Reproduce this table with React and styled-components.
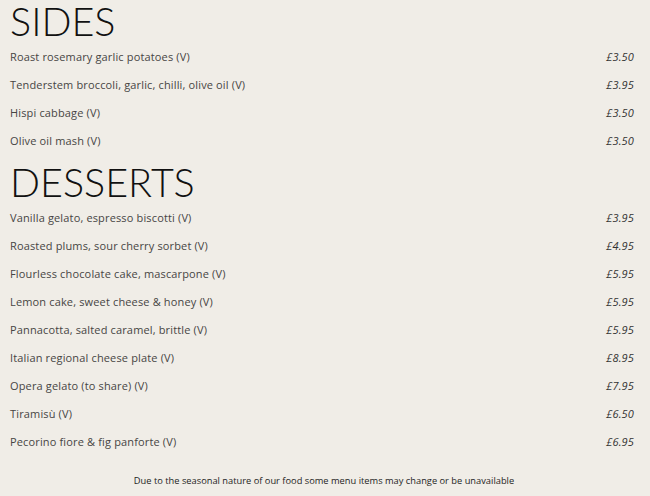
import styled, { createGlobalStyle } from "styled-components";

const GlobalStyle = createGlobalStyle`
  html, body {
    margin: 0;
    padding: 0;
    background: #f0ede7;
  }
`;

const Page = styled.div`
  width: 650px;
  height: 496px;
  background: #f0ede7;
  padding: 0 16px 0 10px;
  box-sizing: border-box;
  overflow: hidden;
`;

const Heading = styled.h2`
  margin: ${(p) => p.$gap}px 0 0;
  height: 43px;
  font-family: Lato, "Liberation Sans", sans-serif;
  font-weight: 300;
  font-size: 39.5px;
  line-height: 42px;
  color: #111;
`;

const List = styled.ul`
  list-style: none;
  margin: 0;
  padding: 0;
`;

const Row = styled.li`
  height: 28px;
  display: flex;
  align-items: center;
  justify-content: space-between;
  font-family: "Open Sans", sans-serif;
  font-size: 11px;
  letter-spacing: 0.15px;
  color: #474544;
  margin-top: -1px;
  margin-bottom: 1px;
`;

const Price = styled.span`
  font-style: italic;
  color: #333;
`;

const Note = styled.p`
  margin: 19px 0 0;
  text-align: center;
  font-family: "Open Sans", sans-serif;
  font-size: 9.3px;
  color: #1e1e1e;
  padding-left: 4px;
`;

const sides = [
  ["Roast rosemary garlic potatoes (V)", "£3.50"],
  ["Tenderstem broccoli, garlic, chilli, olive oil (V)", "£3.95"],
  ["Hispi cabbage (V)", "£3.50"],
  ["Olive oil mash (V)", "£3.50"],
];

const desserts = [
  ["Vanilla gelato, espresso biscotti (V)", "£3.95"],
  ["Roasted plums, sour cherry sorbet (V)", "£4.95"],
  ["Flourless chocolate cake, mascarpone (V)", "£5.95"],
  ["Lemon cake, sweet cheese & honey (V)", "£5.95"],
  ["Pannacotta, salted caramel, brittle (V)", "£5.95"],
  ["Italian regional cheese plate (V)", "£8.95"],
  ["Opera gelato (to share) (V)", "£7.95"],
  ["Tiramisù (V)", "£6.50"],
  ["Pecorino fiore & fig panforte (V)", "£6.95"],
];

const Section = ({ title, items, gap }) => (
  <section>
    <Heading $gap={gap}>{title}</Heading>
    <List>
      {items.map(([name, price]) => (
        <Row key={name}>
          <span>{name}</span>
          <Price>{price}</Price>
        </Row>
      ))}
    </List>
  </section>
);

export default function App() {
  return (
    <Page>
      <GlobalStyle />
      <Section title="SIDES" items={sides} gap={0} />
      <Section title="DESSERTS" items={desserts} gap={7} />
      <Note>
        Due to the seasonal nature of our food some menu items may change or be unavailable
      </Note>
    </Page>
  );
}
